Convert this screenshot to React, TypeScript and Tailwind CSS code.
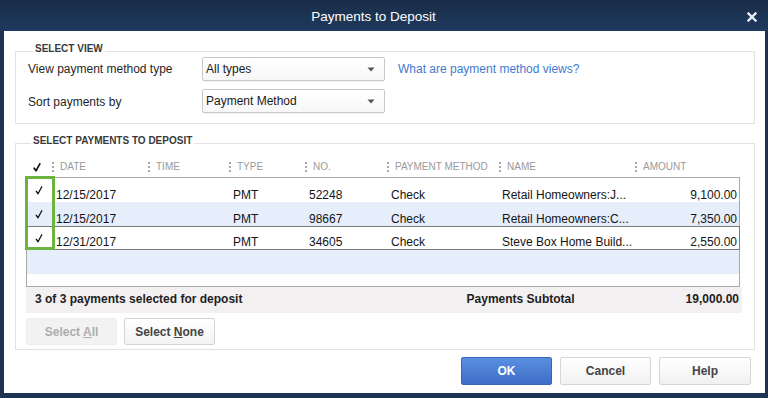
import React from "react";

const font = { fontFamily: '"Liberation Sans", Arial, sans-serif' };

function Check({ bold = false }: { bold?: boolean }) {
  return (
    <svg width="8" height="9" viewBox="0 0 8 9">
      <path
        d="M1.2 5.2 L3 7.8 L6.8 0.8"
        fill="none"
        stroke="#111"
        strokeWidth={bold ? 1.7 : 1.3}
        strokeLinecap="round"
        strokeLinejoin="round"
      />
    </svg>
  );
}

function Caret() {
  return (
    <svg width="8" height="5" viewBox="0 0 8 5">
      <path d="M0.5 0.5 L7.5 0.5 L4 4.5 Z" fill="#555" />
    </svg>
  );
}

function Select({ value }: { value: string }) {
  return (
    <div className="w-[183px] h-[24px] flex items-center justify-between pl-[3px] pr-[9px] border border-[#c9c9c9] rounded-[2px] bg-gradient-to-b from-white to-[#f7f7f7] shadow-[0_1px_1px_rgba(0,0,0,0.06)] text-[12px] text-[#1a1a1a]">
      <span>{value}</span>
      <Caret />
    </div>
  );
}

function Sep() {
  return <div className="h-[10px] w-0 border-l-2 border-dotted border-[#a8a8a8]" />;
}

const cols = "grid grid-cols-[25px_96px_81px_76px_82px_112px_136px_1fr]";

const headers = ["DATE", "TIME", "TYPE", "NO.", "PAYMENT METHOD", "NAME", "AMOUNT"];

const rows = [
  { date: "12/15/2017", type: "PMT", no: "52248", method: "Check", name: "Retail Homeowners:J...", amount: "9,100.00" },
  { date: "12/15/2017", type: "PMT", no: "98667", method: "Check", name: "Retail Homeowners:C...", amount: "7,350.00" },
  { date: "12/31/2017", type: "PMT", no: "34605", method: "Check", name: "Steve Box Home Build...", amount: "2,550.00" },
];

export default function App() {
  return (
    <div
      className="w-[768px] h-[398px] flex flex-col bg-[#1c3353] overflow-hidden"
      style={font}
    >
      {/* Title bar */}
      <div className="h-[31px] shrink-0 flex items-center bg-gradient-to-b from-[#192c47] to-[#1f3b5f] pl-[4px] pr-[11px]">
        <div className="flex-1 flex justify-center pr-[4px]">
          <div className="text-[13.5px] text-white pt-[3px]">Payments to Deposit</div>
        </div>
        <svg width="10" height="10" viewBox="0 0 10 10" className="mt-[3px]">
          <path d="M1.5 1.5 L8.5 8.5 M8.5 1.5 L1.5 8.5" stroke="#e9edf2" strokeWidth="2.4" strokeLinecap="square" />
        </svg>
      </div>

      {/* Body */}
      <div className="ml-[4px] mr-[3px] h-[362px] bg-white flex flex-col pl-[11px] pr-[10px] pt-[12px]">
        {/* SELECT VIEW */}
        <fieldset className="border border-[#e2e2e2] h-[81px] pl-[12px] pr-[12px] pb-[10px]">
          <legend className="ml-[5px] px-[2px] pb-[4px] text-[10px] leading-[12px] font-bold text-[#3a3a3a]">
            SELECT VIEW
          </legend>
          <div className="-mt-[2px] flex flex-col gap-[8px]">
            <div className="flex items-center h-[24px]">
              <div className="w-[174px] text-[12px] text-[#1f1f1f]">View payment method type</div>
              <Select value="All types" />
              <a className="ml-[13px] text-[12px] text-[#3f7bd0]">What are payment method views?</a>
            </div>
            <div className="flex items-center h-[24px]">
              <div className="w-[174px] text-[12px] text-[#1f1f1f] pt-[1px]">Sort payments by</div>
              <Select value="Payment Method" />
            </div>
          </div>
        </fieldset>

        {/* SELECT PAYMENTS TO DEPOSIT */}
        <fieldset className="mt-[11px] border border-[#e2e2e2] h-[215px] pl-[10px] pr-[14px] pb-[4px]">
          <legend className="ml-[5px] px-[2px] pb-[4px] text-[10px] leading-[12px] font-bold text-[#3a3a3a]">
            SELECT PAYMENTS TO DEPOSIT
          </legend>

          {/* header */}
          <div className={`${cols} h-[26px] pl-[1px] items-end pb-[4px]`}>
            <div className="flex items-center justify-start pl-[6px] h-[12px]">
              <Check bold />
            </div>
            {headers.map((h) => (
              <div key={h} className="flex items-center h-[12px]">
                <Sep />
                <span className="ml-[6px] text-[10px] leading-[12px] text-[#9a9a9a]">{h}</span>
              </div>
            ))}
          </div>

          {/* table body */}
          <div className="relative h-[110px] border border-[#a9a9a9] flex flex-col">
            {rows.map((r, i) => (
              <div
                key={i}
                className={`${cols} h-[24px] shrink-0 items-end text-[12px] leading-[14px] text-[#141414] ${
                  i === 1 ? "bg-[#e6eefb]" : "bg-white"
                } ${i === 2 ? "border border-[#7a7a7a] -mx-[1px]" : ""}`}
              >
                <div className="self-center pl-[8px] mt-[1px]">
                  <Check />
                </div>
                <div className="pl-[4px]">{r.date}</div>
                <div />
                <div className="pl-[4px]">{r.type}</div>
                <div className="pl-[4px]">{r.no}</div>
                <div className="pl-[4px]">{r.method}</div>
                <div className="pl-[3px]">{r.name}</div>
                <div className="text-right pr-[2px]">{r.amount}</div>
              </div>
            ))}
            <div className="h-[24px] shrink-0 bg-[#e6eefb]" />
            <div className="flex-1 bg-white" />

            {/* highlight annotation */}
            <div className="absolute -left-[2px] -top-[2px] w-[30px] h-[74px] border-[3px] border-[#6cb33f]" />
          </div>

          {/* summary bar */}
          <div className="h-[26px] flex items-start pt-[3px] justify-between bg-[#f3f0f1] pl-[9px] pr-[3px] text-[12px] font-bold text-[#1e1e1e] -mr-[2px]">
            <span>3 of 3 payments selected for deposit</span>
            <div className="flex">
              <span className="mr-[111px]">Payments Subtotal</span>
              <span>19,000.00</span>
            </div>
          </div>

          {/* select buttons */}
          <div className="mt-[5px] flex gap-[7px]">
            <div className="w-[91px] h-[27px] flex items-center justify-center rounded-[2px] bg-[#f2f2f2] border border-[#ececec] text-[12px] font-bold text-[#adadad]">
              <span>
                Select <span className="underline">A</span>ll
              </span>
            </div>
            <div className="w-[91px] h-[27px] flex items-center justify-center rounded-[2px] bg-gradient-to-b from-white to-[#f3f3f3] border border-[#d4d4d4] text-[12px] font-bold text-[#444]">
              <span>
                Select <span className="underline">N</span>one
              </span>
            </div>
          </div>
        </fieldset>

        {/* bottom buttons */}
        <div className="mt-[7px] flex justify-end gap-[8px] pr-[4px]">
          <div className="w-[91px] h-[28px] flex items-center justify-center rounded-[2px] bg-gradient-to-b from-[#5a8ee0] to-[#3d6fc6] border border-[#3766b6] text-[12px] font-bold text-white">
            OK
          </div>
          <div className="w-[91px] h-[28px] flex items-center justify-center rounded-[2px] bg-gradient-to-b from-white to-[#f1f1f1] border border-[#d6d6d6] text-[12px] font-bold text-[#444]">
            Cancel
          </div>
          <div className="w-[92px] h-[28px] flex items-center justify-center rounded-[2px] bg-gradient-to-b from-white to-[#f1f1f1] border border-[#d6d6d6] text-[12px] font-bold text-[#444]">
            Help
          </div>
        </div>
      </div>
    </div>
  );
}
